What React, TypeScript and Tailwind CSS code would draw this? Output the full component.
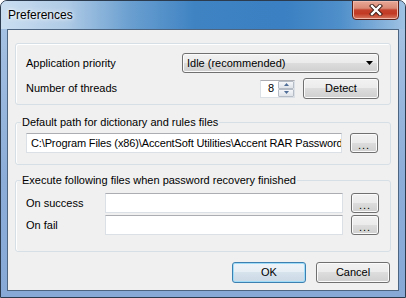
import React from "react";

type BtnProps = {
  children?: React.ReactNode;
  className?: string;
  primary?: boolean;
};

const WinButton: React.FC<BtnProps> = ({ children, className = "", primary }) => (
  <button
    className={`flex items-center justify-center rounded-[3px] border text-[11px] leading-none text-black ${
      primary
        ? "border-[#3c7fb1] bg-[linear-gradient(180deg,#eef4f9_0%,#e6eef5_50%,#d6e2ec_50%,#cbd9e6_100%)] shadow-[inset_0_0_0_1px_#9fdcf7]"
        : "border-[#707070] bg-[linear-gradient(180deg,#f2f2f2_0%,#ebebeb_50%,#dddddd_50%,#cfcfcf_100%)] shadow-[inset_0_0_0_1px_#fbfbfb]"
    } ${className}`}
  >
    {children}
  </button>
);

const TextBox: React.FC<{ className?: string; value?: string }> = ({ className = "", value }) => (
  <div
    className={`flex items-center overflow-hidden whitespace-nowrap border border-[#dbdfe6] border-t-[#abadb3] bg-white pl-[4px] text-[11px] ${className}`}
  >
    {value}
  </div>
);

const Dots = () => <span className="mt-[4px] text-[11px] tracking-[1px]">...</span>;

export default function App() {
  return (
    <div className="flex h-[298px] w-[406px] flex-col overflow-hidden rounded-t-[7px] border border-[#2c3b4d] bg-[linear-gradient(180deg,#a9c4e4_0%,#8cadd8_60%,#86a9d6_100%)] font-['Liberation_Sans',Arial,sans-serif] text-[11px] text-black">
      {/* title bar */}
      <div className="flex h-[28px] shrink-0 items-start justify-between bg-[linear-gradient(90deg,#cadef0_0%,#b0cbe6_16%,#6a9fd0_32%,#3f83c3_48%,#3a80c2_70%,#4f8fca_84%,#9fc2e3_100%)]">
        <span className="pl-[7px] pt-[7px] text-[12px] leading-[14px] [text-shadow:0_0_6px_#ffffff,0_0_3px_#ffffff]">
          Preferences
        </span>
        <div className="mr-[6px] -mt-px flex h-[20px] w-[47px] items-center justify-center rounded-b-[4px] border border-[#5b2118] bg-[linear-gradient(180deg,#e9a897_0%,#d98a76_40%,#c4412b_50%,#c23a24_70%,#d77a62_100%)] shadow-[inset_0_0_0_1px_#f0b9aa]">
          <svg width="14" height="12" viewBox="0 0 14 12">
            <path d="M3 2 L11 10 M11 2 L3 10" stroke="#3a1a14" strokeWidth="4.2" strokeLinecap="square" />
            <path d="M3 2 L11 10 M11 2 L3 10" stroke="#ffffff" strokeWidth="2.4" strokeLinecap="square" />
          </svg>
        </div>
      </div>

      {/* client area */}
      <div className="mx-[6px] mb-[6px] flex flex-1 flex-col border border-[#4d6580] bg-[#f0f0f0]">
        {/* group 1 */}
        <div className="mx-[7px] mt-[13px] h-[62px] rounded-[3px] border border-[#d5dfe5] pl-[10px] pr-[11px] pt-[9px] shadow-[inset_1px_1px_0_#ffffff]">
          <div className="flex h-[20px] items-center">
            <span>Application priority</span>
            <div className="ml-auto flex h-[20px] w-[197px] items-center rounded-[3px] border border-[#707070] bg-[linear-gradient(180deg,#f2f2f2_0%,#ebebeb_50%,#dddddd_50%,#cfcfcf_100%)] pl-[4px] pr-[5px] shadow-[inset_0_0_0_1px_#fbfbfb]">
              <span>Idle (recommended)</span>
              <svg className="ml-auto" width="7" height="4" viewBox="0 0 7 4">
                <path d="M0 0 H7 L3.5 4 Z" fill="#000000" />
              </svg>
            </div>
          </div>
          <div className="mt-[5px] flex h-[21px] items-center">
            <span>Number of threads</span>
            <div className="ml-auto flex h-[18px] w-[35px] border border-[#dbdfe6] border-t-[#abadb3] bg-white">
              <div className="flex flex-1 items-center justify-end pr-[4px]">8</div>
              <div className="flex w-[16px] flex-col">
                <div className="flex h-[8px] items-center justify-center rounded-[1px] border border-[#b6bcc6] bg-[linear-gradient(180deg,#f4f6f9,#dfe4ea)]">
                  <svg width="5" height="3" viewBox="0 0 5 3">
                    <path d="M0 3 H5 L2.5 0 Z" fill="#4f6d97" />
                  </svg>
                </div>
                <div className="flex h-[8px] items-center justify-center rounded-[1px] border border-[#b6bcc6] bg-[linear-gradient(180deg,#f4f6f9,#dfe4ea)]">
                  <svg width="5" height="3" viewBox="0 0 5 3">
                    <path d="M0 0 H5 L2.5 3 Z" fill="#4f6d97" />
                  </svg>
                </div>
              </div>
            </div>
            <WinButton className="ml-[8px] h-[21px] w-[76px]">Detect</WinButton>
          </div>
        </div>

        {/* group 2 */}
        <fieldset className="mx-[7px] mt-[11px] rounded-[3px] border border-[#d5dfe5] pb-[11px] pl-[5px] pr-[11px] shadow-[inset_1px_0_0_#ffffff]">
          <legend className="px-[1px] leading-[13px]">Default path for dictionary and rules files</legend>
          <div className="flex items-center pl-[5px] pt-[4px]">
            <TextBox
              className="h-[20px] w-[316px] tracking-[-0.13px]"
              value="C:\Program Files (x86)\AccentSoft Utilities\Accent RAR Password Recovery"
            />
            <WinButton className="ml-[8px] h-[20px] w-[28px]">
              <Dots />
            </WinButton>
          </div>
        </fieldset>

        {/* group 3 */}
        <fieldset className="mx-[7px] mt-[9px] rounded-[3px] border border-[#d5dfe5] pb-[16px] pl-[5px] pr-[11px] shadow-[inset_1px_0_0_#ffffff]">
          <legend className="px-[1px] leading-[13px]">Execute following files when password recovery finished</legend>
          <div className="flex flex-col gap-[2px] pl-[5px] pt-[6px]">
            <div className="flex items-center">
              <span className="w-[79px]">On success</span>
              <TextBox className="h-[20px] w-[238px]" />
              <WinButton className="ml-[8px] h-[20px] w-[28px]">
                <Dots />
              </WinButton>
            </div>
            <div className="flex items-center">
              <span className="w-[79px]">On fail</span>
              <TextBox className="h-[20px] w-[238px]" />
              <WinButton className="ml-[8px] h-[20px] w-[28px]">
                <Dots />
              </WinButton>
            </div>
          </div>
        </fieldset>

        {/* dialog buttons */}
        <div className="mt-[10px] flex justify-end gap-[10px] pr-[8px]">
          <WinButton primary className="h-[21px] w-[74px]">
            OK
          </WinButton>
          <WinButton className="h-[21px] w-[74px]">Cancel</WinButton>
        </div>
      </div>
    </div>
  );
}
